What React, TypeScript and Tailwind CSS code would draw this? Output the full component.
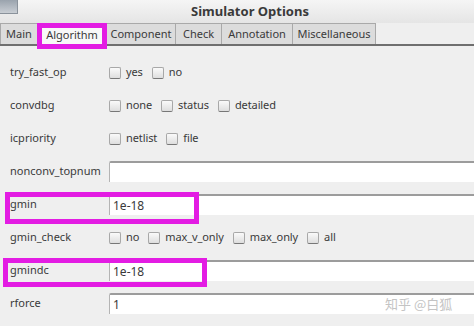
import React from 'react';

const tabs = [
  { name: 'Main', w: 'w-[38px]' },
  { name: 'Algorithm', w: 'w-[70px]', active: true },
  { name: 'Component', w: 'w-[70px]' },
  { name: 'Check', w: 'w-[47px]' },
  { name: 'Annotation', w: 'w-[72px]' },
  { name: 'Miscellaneous', w: 'w-[84px]' },
];

const Checkbox = ({ label }: { label: string }) => (
  <div className="flex items-center gap-[5px] mr-[9px]">
    <div className="w-[12px] h-[12px] rounded-[2px] border border-[#a8a8a8] border-b-[#777] bg-gradient-to-b from-[#fafafa] to-[#dedede]" />
    <span className="tracking-[-0.1px]">{label}</span>
  </div>
);

const Field = ({ value }: { value?: string }) => (
  <div className="flex-1 h-[21px] bg-white border-t-2 border-l border-t-[#9c9c9c] border-l-[#b4b4b4] rounded-tl-[2px] pl-[3px] flex items-center text-[12px]">
    {value}
  </div>
);

const Row = ({ label, children, mark }: { label: string; children: React.ReactNode; mark?: string }) => (
  <div className="relative h-[33px] flex items-center">
    <div className="w-[109px] pl-[10px] shrink-0">{label}</div>
    {children}
    {mark && <div className={`absolute border-[5px] border-[#e31ce3] pointer-events-none ${mark}`} />}
  </div>
);

export default function App() {
  return (
    <div className="w-[474px] h-[326px] overflow-hidden bg-[#efefef] text-[#3a3a3a] text-[11px] font-['Noto_Sans',sans-serif]">
      {/* Title bar */}
      <div className="relative h-[23px] bg-gradient-to-b from-[#f5f5f5] to-[#e5e5e5] flex items-center justify-center">
        <div className="absolute left-0 top-0 w-[18px] h-[14px] bg-gradient-to-b from-[#9aa3ad] to-[#c9ced4] border-r border-b border-[#8a929b]" />
        <span className="font-bold text-[13px] text-[#3a3a3a] ml-[26px]">Simulator Options</span>
      </div>

      {/* Tabs */}
      <div className="relative flex items-end h-[23px] border-b-2 border-[#6f6f6f]">
        {tabs.map((t) => (
          <div
            key={t.name}
            className={`${t.w} h-[21px] flex items-center justify-center border border-b-0 border-[#a9a9a9] -mr-px ${
              t.active ? 'bg-[#f8f8f8] h-[22px] -mb-[2px]' : 'bg-[#dcdcdc]'
            }`}
          >
            {t.name}
          </div>
        ))}
        <div className="absolute left-[37px] top-[0px] w-[70px] h-[26px] border-[5px] border-[#e31ce3]" />
      </div>

      {/* Options */}
      <div className="pt-[10px]">
        <Row label="try_fast_op">
          <Checkbox label="yes" />
          <Checkbox label="no" />
        </Row>
        <Row label="convdbg">
          <Checkbox label="none" />
          <Checkbox label="status" />
          <Checkbox label="detailed" />
        </Row>
        <Row label="icpriority">
          <Checkbox label="netlist" />
          <Checkbox label="file" />
        </Row>
        <Row label="nonconv_topnum">
          <Field />
        </Row>
        <Row label="gmin" mark="left-[5px] top-[4px] w-[194px] h-[32px]">
          <Field value="1e-18" />
        </Row>
        <Row label="gmin_check">
          <Checkbox label="no" />
          <Checkbox label="max_v_only" />
          <Checkbox label="max_only" />
          <Checkbox label="all" />
        </Row>
        <Row label="gmindc" mark="left-[3px] top-[4px] w-[204px] h-[29px]">
          <Field value="1e-18" />
        </Row>
        <Row label="rforce">
          <Field value="1" />
          <span className="absolute left-[385px] text-[13px] text-[#c4c4c4] font-['Noto_Sans_CJK_SC',sans-serif]">
            知乎 @白狐
          </span>
        </Row>
        <Row label="">
          <Field />
        </Row>
      </div>
    </div>
  );
}
